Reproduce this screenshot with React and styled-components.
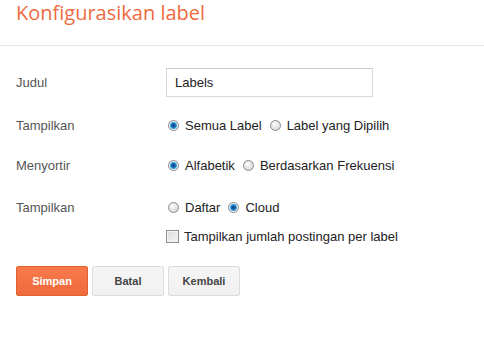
import styled, { createGlobalStyle } from "styled-components";

const Global = createGlobalStyle`
  html, body { margin: 0; padding: 0; background: #fff; }
  body { font-family: Arial, "Liberation Sans", sans-serif; }
`;

const Header = styled.div`
  height: 46px;
  padding: 0 16px;
  border-bottom: 1px solid #e5e5e5;
  box-sizing: border-box;
`;

const Title = styled.h1`
  margin: 0;
  font-family: "Open Sans", sans-serif;
  font-weight: 400;
  font-size: 20px;
  line-height: 26px;
  color: #ee6a40;
`;

const Form = styled.div`
  padding: 22px 16px 0 16px;
`;

const Row = styled.div`
  display: grid;
  grid-template-columns: 150px 1fr;
  align-items: center;
  height: ${(p) => p.h || 20}px;
  margin-top: ${(p) => p.mt || 0}px;
`;

const Label = styled.div`
  font-size: 13px;
  color: #555;
`;

const TextInput = styled.div`
  width: 207px;
  height: 29px;
  box-sizing: border-box;
  border: 1px solid #d9d9d9;
  border-top-color: #c8c8c8;
  padding: 0 8px;
  display: flex;
  align-items: center;
  font-size: 13px;
  color: #222;
`;

const Options = styled.div`
  display: flex;
  align-items: center;
  padding-left: ${(p) => p.pl || 2}px;
  font-size: 13px;
  color: #222;
`;

const Option = styled.label`
  display: flex;
  align-items: center;
  gap: 6px;
  margin-right: 8px;
`;

const Radio = styled.span`
  width: 11px;
  height: 11px;
  border-radius: 50%;
  box-sizing: border-box;
  border: 1px solid #8a8a8a;
  background: ${(p) =>
    p.checked
      ? "radial-gradient(circle at 50% 50%, #0b3a66 0, #1e6fb8 2px, #3d9be0 3px, #e8eef3 4px, #f2f2f2 100%)"
      : "radial-gradient(circle at 40% 35%, #ffffff 0, #e9e9e9 3px, #d2d2d2 100%)"};
`;

const Check = styled.span`
  width: 13px;
  height: 13px;
  box-sizing: border-box;
  border: 1px solid #8e8f8f;
  background: linear-gradient(135deg, #dcdcdc, #f5f5f5);
  box-shadow: inset 0 0 0 1px #f4f4f4;
  margin-left: -2px;
`;

const Buttons = styled.div`
  display: flex;
  gap: 4px;
  margin-top: 20px;
`;

const Button = styled.div`
  width: ${(p) => p.w}px;
  height: 30px;
  box-sizing: border-box;
  display: flex;
  align-items: center;
  justify-content: center;
  font-size: 11px;
  font-weight: bold;
  border-radius: 2px;
  border: 1px solid ${(p) => (p.primary ? "#e0602f" : "#dcdcdc")};
  background: ${(p) => (p.primary ? "linear-gradient(#f87a4b, #f06a3c)" : "linear-gradient(#f5f5f5, #f1f1f1)")};
  color: ${(p) => (p.primary ? "#fff" : "#444")};
`;

export default function App() {
  return (
    <>
      <Global />
      <Header>
        <Title>Konfigurasikan label</Title>
      </Header>
      <Form>
        <Row h={29}>
          <Label>Judul</Label>
          <TextInput>Labels</TextInput>
        </Row>
        <Row mt={18}>
          <Label>Tampilkan</Label>
          <Options>
            <Option><Radio checked />Semua Label</Option>
            <Option><Radio />Label yang Dipilih</Option>
          </Options>
        </Row>
        <Row mt={20}>
          <Label>Menyortir</Label>
          <Options>
            <Option><Radio checked />Alfabetik</Option>
            <Option><Radio />Berdasarkan Frekuensi</Option>
          </Options>
        </Row>
        <Row mt={22}>
          <Label>Tampilkan</Label>
          <Options>
            <Option><Radio />Daftar</Option>
            <Option><Radio checked />Cloud</Option>
          </Options>
        </Row>
        <Row mt={9}>
          <div />
          <Options>
            <Option style={{ gap: "5px" }}><Check />Tampilkan jumlah postingan per label</Option>
          </Options>
        </Row>
        <Buttons>
          <Button primary w={72}>Simpan</Button>
          <Button w={72}>Batal</Button>
          <Button w={72}>Kembali</Button>
        </Buttons>
      </Form>
    </>
  );
}
